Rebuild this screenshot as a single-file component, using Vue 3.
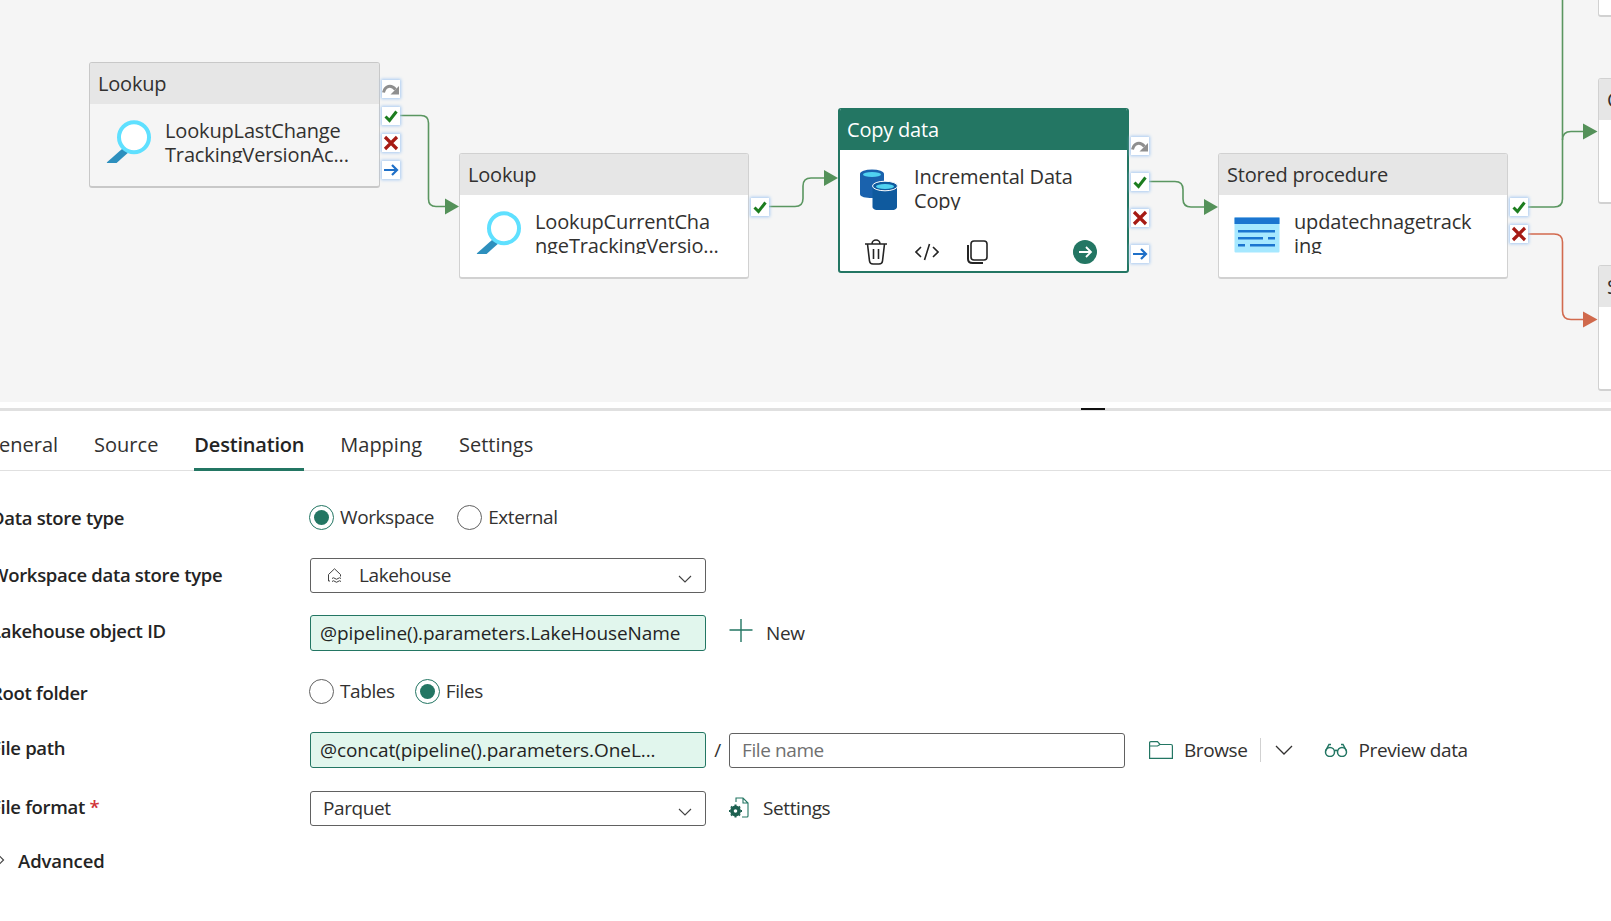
<script setup>
const cards = [
  { id: 1, x: 89, y: 62, w: 291, h: 126, title: 'Lookup', lines: ['LookupLastChange', 'TrackingVersionAc...'], icon: 'lens', muted: true },
  { id: 2, x: 459, y: 153, w: 290, h: 126, title: 'Lookup', lines: ['LookupCurrentCha', 'ngeTrackingVersio...'], icon: 'lens' },
  { id: 3, x: 838, y: 108, w: 291, h: 165, title: 'Copy data', lines: ['Incremental Data', 'Copy'], icon: 'db', active: true },
  { id: 4, x: 1218, y: 153, w: 290, h: 126, title: 'Stored procedure', lines: ['updatechnagetrack', 'ing'], icon: 'proc' },
  { id: 5, x: 1598, y: -109, w: 60, h: 126, title: '', lines: [] },
  { id: 6, x: 1598, y: 78, w: 60, h: 126, title: 'C', lines: [] },
  { id: 7, x: 1598, y: 265, w: 60, h: 126, title: 'S', lines: [] }
]
const ports = [
  { x: 382, y: 80, k: 'skip' }, { x: 382, y: 107, k: 'ok' }, { x: 382, y: 134, k: 'fail' }, { x: 382, y: 161, k: 'next' },
  { x: 751, y: 198, k: 'ok' },
  { x: 1131, y: 137, k: 'skip' }, { x: 1131, y: 173, k: 'ok' }, { x: 1131, y: 209, k: 'fail' }, { x: 1131, y: 245, k: 'next' },
  { x: 1510, y: 198, k: 'ok' }, { x: 1510, y: 225, k: 'fail' }
]
const pos = (o) => ({ left: o.x + 'px', top: o.y + 'px' })
const size = (o) => ({ left: o.x + 'px', top: o.y + 'px', width: o.w + 'px', height: o.h + 'px' })
const tabs = ['General', 'Source', 'Destination', 'Mapping', 'Settings']
</script>

<template>
  <div class="page">
    <section class="canvas">
      <svg class="edges" width="1611" height="402" viewBox="0 0 1611 402" fill="none">
        <g stroke="#5a9660" stroke-width="1.6">
          <path d="M400 115.5H421Q428.5 115.5 428.5 123V199Q428.5 206.5 436 206.5H446" />
          <path d="M769 206.5H795Q803 206.5 803 198.5V186Q803 178 811 178H825" />
          <path d="M1148 181.5H1175Q1183 181.5 1183 189.500V199Q1183 207 1191 207H1205" />
          <path d="M1528 207H1554Q1562.500 207 1562.500 199V0" />
          <path d="M1562.500 140Q1562.500 131.500 1571 131.500H1584" />
        </g>
        <path d="M1528 234H1554Q1562.500 234 1562.500 242V311Q1562.500 319.500 1571 319.500H1584" stroke="#d26a4e" stroke-width="1.6" />
        <g fill="#549159">
          <path d="M445 198.500V214.500L459 206.500Z" />
          <path d="M824 170V186L838 178Z" />
          <path d="M1204 199V215L1218 207Z" />
          <path d="M1583 123.500V139.500L1597.500 131.500Z" />
        </g>
        <path d="M1583 311.500V327.500L1597.500 319.500Z" fill="#d0694c" />
      </svg>

      <article
        v-for="c in cards"
        :key="c.id"
        class="card"
        :class="{ active: c.active, muted: c.muted }"
        :style="size(c)"
      >
        <header class="card-head">{{ c.title }}</header>
        <div v-if="c.lines.length" class="card-body">
          <span class="card-icon">
            <svg v-if="c.icon === 'lens'" width="44" height="50" viewBox="0 0 44 50">
              <path d="M18 32L1 47" stroke="#2d8fbd" stroke-width="7" />
              <circle cx="26" cy="19.300" r="15" fill="#fff" stroke="#5fe0ff" stroke-width="4" />
            </svg>
            <svg v-else-if="c.icon === 'db'" class="db" width="40" height="44" viewBox="0 0 40 44">
              <path d="M1 5V25C1 28 7 29 13 29S25 28 25 25V5Z" fill="#1a62ad" />
              <ellipse cx="13" cy="5" rx="12" ry="4.500" fill="#1a62ad" />
              <ellipse cx="13" cy="5.500" rx="9" ry="2.500" fill="#50d2f0" />
              <path d="M13.500 17V38C13.500 41 20 42 26 42S38 41 38 38V17Z" fill="#0f5a9e" />
              <ellipse cx="26" cy="17" rx="12.500" ry="4.800" fill="#0f5a9e" stroke="#fff" stroke-width="1" />
              <ellipse cx="26" cy="17.500" rx="9" ry="2.500" fill="#50d2f0" />
            </svg>
            <svg v-else-if="c.icon === 'proc'" class="proc" width="46" height="36" viewBox="0 0 46 36">
              <rect x="0.500" y="0.500" width="45" height="35" rx="1" fill="#a6e8ff" />
              <rect x="0.500" y="0.500" width="45" height="6.500" fill="#1b75d0" />
              <g fill="#1b75d0">
                <rect x="4" y="13" width="37" height="2.500" />
                <rect x="4" y="20" width="25" height="2.500" />
                <rect x="34" y="20" width="7" height="2.500" />
                <rect x="4" y="27" width="7" height="2.500" />
                <rect x="16" y="27" width="25" height="2.500" />
              </g>
            </svg>
          </span>
          <div class="card-name">
            <div v-for="l in c.lines" :key="l">{{ l }}</div>
          </div>
        </div>
        <footer v-if="c.active" class="card-actions">
          <svg width="24" height="26" viewBox="0 0 24 26" fill="none" stroke="#242424" stroke-width="1.600">
            <path d="M1 5H23M8 5C8 2.500 10 1 12 1S16 2.500 16 5M3.500 5L5.500 22C5.700 24 7 25 9 25H15C17 25 18.300 24 18.500 22L20.500 5M9.500 10V20M14.500 10V20" />
          </svg>
          <svg width="24" height="18" viewBox="0 0 24 18" fill="none" stroke="#242424" stroke-width="1.600">
            <path d="M6 4L1 9L6 14M18 4L23 9L18 14M14.500 1L9.500 17" />
          </svg>
          <svg width="22" height="24" viewBox="0 0 22 24" fill="none" stroke="#242424" stroke-width="1.600">
            <rect x="5" y="1" width="16" height="19" rx="3" />
            <path d="M2 5V19C2 21.500 4 23 6.500 23H17" stroke-width="2" />
          </svg>
          <svg class="go" width="24" height="24" viewBox="0 0 24 24">
            <circle cx="12" cy="12" r="12" fill="#237663" />
            <path d="M6 12H18M13 7L18 12L13 17" fill="none" stroke="#fff" stroke-width="1.800" />
          </svg>
        </footer>
      </article>

      <span v-for="(p, i) in ports" :key="i" class="port" :style="pos(p)">
        <svg width="18" height="18" viewBox="0 0 18 18" fill="none">
          <template v-if="p.k === 'skip'">
            <path d="M1.500 12.500C3 6 9 4 13.500 9.500" stroke="#8f8f8f" stroke-width="3" />
            <path d="M17 6V14.500H8.500Z" fill="#8f8f8f" />
          </template>
          <path v-else-if="p.k === 'ok'" d="M3.500 9.500L7.500 13.500L14.500 4.500" stroke="#1c7d1f" stroke-width="3" />
          <path v-else-if="p.k === 'fail'" d="M3 3L15 15M15 3L3 15" stroke="#a61a14" stroke-width="3.200" />
          <path v-else d="M2 9H15M10 4L15 9L10 14" stroke="#1f70c8" stroke-width="2.200" />
        </svg>
      </span>
    </section>

    <div class="divider"><span class="grip"></span></div>

    <nav class="tabs">
      <a v-for="t in tabs" :key="t" class="tab" :class="{ on: t === 'Destination' }">{{ t }}</a>
    </nav>

    <form class="form" @submit.prevent>
      <div class="row r1">
        <label class="lbl">Data store type</label>
        <div class="ctl opts">
          <span class="radio on"></span><span class="opt w1">Workspace</span>
          <span class="radio"></span><span class="opt">External</span>
        </div>
      </div>

      <div class="row r2">
        <label class="lbl">Workspace data store type</label>
        <div class="ctl">
          <div class="field select">
            <svg class="lake" width="18" height="16" viewBox="0 0 18 16" fill="none" stroke="#424242" stroke-width="1">
              <path d="M4 13H2.500V6.500L8.500 .8L14.500 6.500V8.500" />
              <path d="M6 10.500Q7.500 9 9 10.500T12 10.500T15 10.500M6 13.500Q7.500 12 9 13.500T12 13.500T15 13.500" />
            </svg>
            <span class="val">Lakehouse</span>
            <svg class="chev" width="14" height="8" viewBox="0 0 14 8" fill="none" stroke="#424242" stroke-width="1.100"><path d="M1 1L7 7L13 1" /></svg>
          </div>
        </div>
      </div>

      <div class="row r3">
        <label class="lbl">Lakehouse object ID</label>
        <div class="ctl">
          <div class="field dyn">@pipeline().parameters.LakeHouseName</div>
          <button class="act new" type="button">
            <svg width="24" height="24" viewBox="0 0 24 24" fill="none" stroke="#237663" stroke-width="1.400"><path d="M12 1V24M0.500 12H23.500" /></svg>
            New
          </button>
        </div>
      </div>

      <div class="row r4">
        <label class="lbl">Root folder</label>
        <div class="ctl opts">
          <span class="radio"></span><span class="opt w2">Tables</span>
          <span class="radio on"></span><span class="opt">Files</span>
        </div>
      </div>

      <div class="row r5">
        <label class="lbl">File path</label>
        <div class="ctl">
          <div class="field dyn">@concat(pipeline().parameters.OneL...</div>
          <span class="slash">/</span>
          <div class="field name">File name</div>
          <button class="act browse" type="button">
            <svg width="24" height="18" viewBox="0 0 24 18" fill="none" stroke="#237663" stroke-width="1.200">
              <path d="M.6 17.400V1.800Q.6 .6 1.800 .6H8.500L11 3.500H22Q23.400 3.500 23.400 5V17.400ZM.6 5H8.500L11 3.500" />
            </svg>
            Browse
          </button>
          <span class="sep"></span>
          <svg class="drop" width="18" height="10" viewBox="0 0 18 10" fill="none" stroke="#323130" stroke-width="1.300"><path d="M1 1L9 9L17 1" /></svg>
          <button class="act preview" type="button">
            <svg width="24" height="14" viewBox="0 0 24 14" fill="none" stroke="#237663" stroke-width="1.500">
              <circle cx="6" cy="9" r="4.500" /><circle cx="18" cy="9" r="4.500" />
              <path d="M10.500 8Q12 6.500 13.500 8M1.500 8L5 1.500H7M22.500 8L19 1.500H17" />
            </svg>
            Preview data
          </button>
        </div>
      </div>

      <div class="row r6">
        <label class="lbl">File format <em>*</em></label>
        <div class="ctl">
          <div class="field select plain">
            <span class="val">Parquet</span>
            <svg class="chev" width="14" height="8" viewBox="0 0 14 8" fill="none" stroke="#424242" stroke-width="1.100"><path d="M1 1L7 7L13 1" /></svg>
          </div>
          <button class="act gear" type="button">
            <svg width="20" height="21" viewBox="0 0 20 21" fill="none">
              <path d="M7 5V1H14L19 6V19Q19 20 18 20H13M14 1V6H19" stroke="#237663" stroke-width="1.100" />
              <circle cx="6.500" cy="14" r="3.600" stroke="#1d6050" stroke-width="3.600" />
              <path d="M6.500 7.500V9M6.500 19V20.500M0 14H1.500M11.500 14H13M2 9.500L3 10.500M10 17.500L11 18.500M2 18.500L3 17.500M10 10.500L11 9.500" stroke="#1d6050" stroke-width="2" />
            </svg>
            Settings
          </button>
        </div>
      </div>

      <div class="adv">
        <svg width="7" height="10" viewBox="0 0 7 10" fill="none" stroke="#424242" stroke-width="1.200"><path d="M1.500 1L5.500 5L1.500 9" /></svg>
        <span>Advanced</span>
      </div>
    </form>
  </div>
</template>

<style scoped>
.page {
  width: 1611px;
  height: 921px;
  overflow: hidden;
  background: #fff;
  font-family: "Open Sans", "Noto Sans", sans-serif;
  color: #242424;
  font-size: 19px;
  letter-spacing: -0.4px;
}
.canvas {
  position: relative;
  height: 402px;
  background: #f5f5f5;
  overflow: hidden;
}
.edges { position: absolute; left: 0; top: 0; }
.card {
  position: absolute;
  box-sizing: border-box;
  background: #fff;
  border: 1px solid #d1d1d1;
  border-bottom-width: 2px;
  border-radius: 3px;
  overflow: hidden;
}
.card.muted { background: #f5f5f5; border-color: #c8c8c8; }
.card-head {
  box-sizing: border-box;
  height: 41px;
  padding: 0 8px;
  line-height: 42px;
  background: #e6e6e6;
  color: #323130;
  font-size: 20px;
  letter-spacing: -0.2px;
  white-space: nowrap;
}
.card.active {
  border: 2px solid #237663;
  border-top-width: 1px;
  border-bottom-width: 2px;
}
.active .card-head { background: #237663; color: #fff; padding: 0 7px; }
.card-body {
  display: flex;
  height: 45px;
  margin-top: 14px;
  padding-left: 18px;
  overflow: hidden;
}
.active .card-body { height: 46px; padding-left: 19px; }
.card-icon { flex: 0 0 57px; display: block; }
.active .card-icon { flex-basis: 55px; }
.card-icon svg { display: block; overflow: visible; }
.db { margin-top: 5px; }
.proc { margin: 8px 0 0 -3px; }
.card-name {
  margin-top: 1px;
  line-height: 23.5px;
  color: #323130;
  font-size: 20px;
  letter-spacing: -0.15px;
  white-space: nowrap;
}
.card-actions {
  display: flex;
  align-items: center;
  height: 30px;
  margin-top: 27px;
  padding-left: 24px;
  gap: 27px;
}
.go { margin-left: 58px; }
.port {
  position: absolute;
  width: 18px;
  height: 18px;
  background: #fff;
  box-shadow: 0 0 3px 1px #a9cbf2;
}
.port svg { display: block; }
.divider {
  position: relative;
  margin-top: 6px;
  height: 3px;
  background: #e0e0e0;
}
.grip {
  position: absolute;
  left: 1081px;
  top: 0;
  width: 24px;
  height: 2px;
  background: #111;
}
.tabs {
  display: flex;
  box-sizing: border-box;
  height: 60px;
  margin-left: -15.500px;
  gap: 36px;
  position: relative;
}
.tabs::after {
  content: "";
  position: absolute;
  left: 0;
  right: 0;
  bottom: 0;
  height: 1px;
  background: #e0e0e0;
}
.tab {
  box-sizing: border-box;
  height: 60px;
  padding-top: 19px;
  line-height: 30px;
  font-size: 20px;
  color: #323130;
  letter-spacing: 0;
  position: relative;
  z-index: 1;
}
.tab:last-child { margin-left: 1px; }
.tab.on {
  font-weight: 600;
  color: #242424;
  letter-spacing: -0.2px;
  border-bottom: 3px solid #237663;
}
.form { padding: 34px 0 0 0; }
.row { display: flex; align-items: center; }
.r1 { height: 26px; }
.r2 { height: 35px; margin-top: 27px; }
.r3 { height: 36px; margin-top: 22px; }
.r4 { height: 26px; margin-top: 28px; }
.r5 { height: 36px; margin-top: 27px; }
.r6 { height: 35px; margin-top: 23px; }
.lbl {
  box-sizing: border-box;
  flex: 0 0 310px;
  margin-left: -9px;
  margin-right: 9px;
  font-weight: 600;
  font-size: 18.500px;
  color: #242424;
  letter-spacing: -0.3px;
  white-space: nowrap;
}
.r1 .lbl, .r2 .lbl { margin-bottom: 2px; }
.r3 .lbl, .r5 .lbl { margin-bottom: 6px; }
.r6 .lbl { margin-bottom: 4px; }
.lbl em { font-style: normal; color: #d13438; }
.ctl { display: flex; align-items: center; height: 100%; }
.opts { margin-left: -1px; }
.radio {
  box-sizing: border-box;
  width: 25px;
  height: 25px;
  border: 1px solid #616161;
  border-radius: 50%;
  display: grid;
  place-items: center;
  flex: none;
  margin-bottom: 2px;
}
.radio.on { border-color: #237663; }
.radio.on::before {
  content: "";
  width: 15px;
  height: 15px;
  border-radius: 50%;
  background: #237663;
}
.opt { margin-left: 6px; font-size: 19px; color: #323130; margin-bottom: 2px; }
.w1 { margin-right: 23px; }
.w2 { margin-right: 20px; }
.field {
  box-sizing: border-box;
  width: 396px;
  height: 100%;
  display: flex;
  align-items: center;
  border: 1px solid #616161;
  border-radius: 3px;
  padding: 0 9px 2px;
  font-size: 19px;
  white-space: nowrap;
}
.select { position: relative; color: #323130; }
.lake { margin-left: 6px; margin-top: 2px; }
.val { margin-left: 15px; }
.plain .val { margin-left: 3px; }
.chev { position: absolute; right: 13px; top: 16px; }
.dyn {
  background: #e1f6ed;
  border-color: #237663;
  font-weight: 500;
  letter-spacing: -0.07px;
  color: #242424;
  padding-bottom: 0;
}
.slash { width: 23px; text-align: center; font-size: 19px; color: #323130; }
.name { width: 396px; color: #707070; padding: 0 12px 1px; height: 35px; }
.act {
  display: flex;
  align-items: center;
  border: 0;
  padding: 0;
  background: none;
  font: inherit;
  font-size: 19px;
  letter-spacing: inherit;
  color: #323130;
}
.new { margin-left: 23px; gap: 13px; }
.new svg { margin-bottom: 6px; }
.browse { margin-left: 24px; gap: 11px; }
.sep { width: 1px; height: 24px; background: #d1d1d1; margin-left: 12px; }
.drop { margin-left: 14px; }
.preview { margin-left: 31px; gap: 11px; }
.gear { margin-left: 23px; gap: 14px; margin-bottom: 2px; }
.adv {
  display: flex;
  align-items: center;
  gap: 13px;
  margin: 22px 0 0 -2px;
  height: 24px;
  font-weight: 600;
  font-size: 18.500px;
  letter-spacing: -0.1px;
}
</style>

<style>
html, body { margin: 0; background: #fff; overflow: hidden; }
</style>
